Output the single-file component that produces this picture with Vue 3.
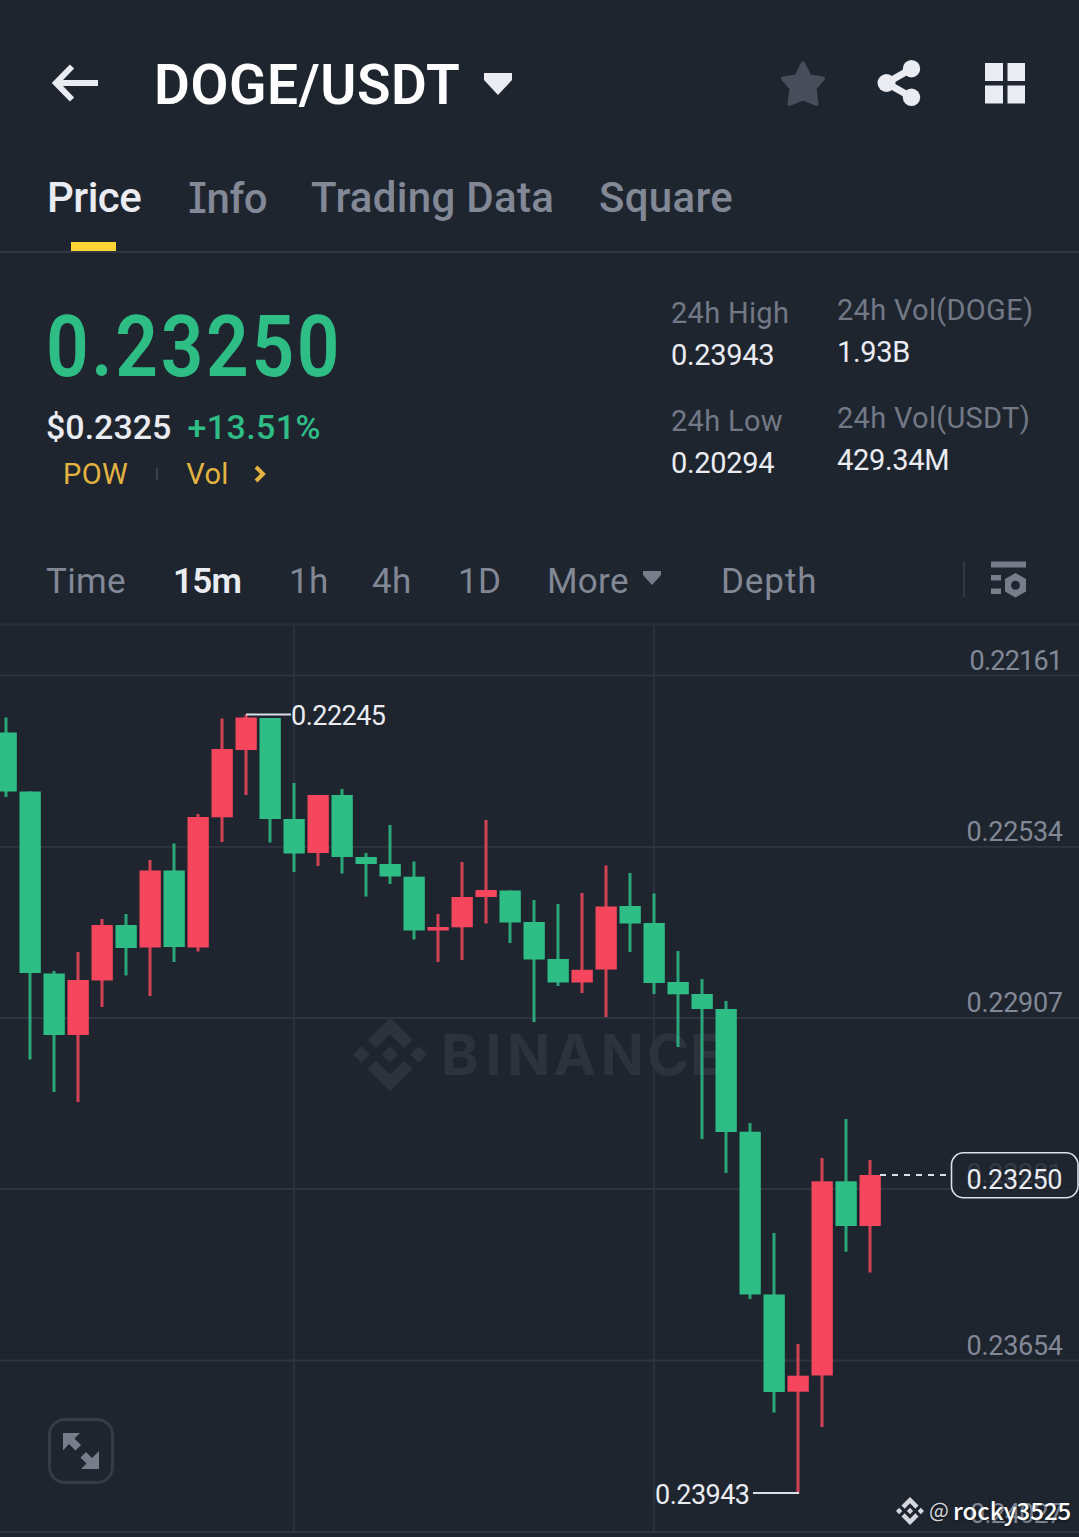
<template>
  <div class="screen">
    <header class="header">
      <svg class="back" width="46" height="38" viewBox="0 0 46 38">
        <path d="M20 2.5 L4 19 L20 35.5 M4 19 H46" />
      </svg>
      <h1 class="pair">DOGE/USDT</h1>
      <svg class="caret" width="28" height="22" viewBox="0 0 28 22">
        <path d="M0 0 H28 V7 L14 22 L0 7 Z" />
      </svg>
      <div class="actions">
        <svg class="star" width="46" height="48" viewBox="0 0 46 48">
          <path d="M23 3.5 L29.5 16.5 L43 18.5 L34.5 28.5 L36.5 44 L23 38.5 L9.5 44 L11.5 28.5 L3 18.5 L16.5 16.5 Z" />
        </svg>
        <svg class="share" width="44" height="48" viewBox="0 0 44 48">
          <path d="M35 9.5 L9.5 24 L35 38.5" />
          <circle cx="9.5" cy="24" r="9" />
          <circle cx="34.5" cy="9.7" r="8.7" />
          <circle cx="34.5" cy="38.3" r="8.7" />
        </svg>
        <svg class="grid" width="40" height="42" viewBox="0 0 40 42">
          <path d="M0 0 H18 V18 H0 Z M22.5 0 H40 V18 H22.5 Z M0 22.5 H18 V40.5 H0 Z M22.5 22.5 H40 V40.5 H22.5 Z" />
        </svg>
      </div>
    </header>

    <nav class="tabs">
      <div
        v-for="tab in tabs"
        :key="tab.name"
        class="tab"
        :class="[tab.cls, { active: tab.name === activeTab }]"
        @click="activeTab = tab.name"
      >{{ tab.name }}</div>
    </nav>

    <section class="ticker">
      <div class="ticker-price">
        <div class="last-price">0.23250</div>
        <div class="sub-price">
          <span class="fiat">$0.2325</span>
          <span class="change">+13.51%</span>
        </div>
        <div class="tags">
          <span class="tag-pow">POW</span>
          <i class="tag-divider"></i>
          <span class="tag-vol">Vol</span>
          <svg class="chevron" width="12" height="18" viewBox="0 0 12 18">
            <path d="M2 2 L9 9 L2 16" />
          </svg>
        </div>
      </div>
      <div class="stats">
        <div v-for="(column, index) in stats" :key="index" class="stats-column">
          <div v-for="stat in column" :key="stat.label" class="stat">
            <div class="stat-label">{{ stat.label }}</div>
            <div class="stat-value">{{ stat.value }}</div>
          </div>
        </div>
      </div>
    </section>

    <nav class="intervals">
      <div class="interval">Time</div>
      <div class="interval active">15m</div>
      <div class="interval">1h</div>
      <div class="interval">4h</div>
      <div class="interval">1D</div>
      <div class="interval more">
        More
        <svg width="18" height="14" viewBox="0 0 18 14">
          <path d="M0 0 H18 V4 L9 14 L0 4 Z" />
        </svg>
      </div>
      <div class="interval depth">Depth</div>
      <div class="settings">
        <svg width="36" height="37" viewBox="0 0 36 37">
          <path d="M0 0.5 H35 V6.5 H0 Z M0 14 H10 V19.5 H0 Z M0 27.5 H10 V33 H0 Z" />
          <path fill-rule="evenodd" d="M24.5 12 L35 18 V30.5 L24.5 36.5 L14 30.5 V18 Z M24.5 19.7 A4.5 4.5 0 1 0 24.5 28.7 A4.5 4.5 0 1 0 24.5 19.7 Z" />
        </svg>
      </div>
    </nav>

    <section class="chart">
      <svg width="1079" height="911" viewBox="0 626 1079 911">
        <g class="grid-lines">
          <path v-for="y in gridRows" :key="'r' + y" :d="`M0 ${y} H1079`" />
          <path v-for="x in gridColumns" :key="'c' + x" :d="`M${x} 626 V1532`" />
        </g>

        <g class="brand">
          <path transform="translate(390 1054.5) scale(3.08)" :d="logoPath" />
          <text x="441 485.5 507 553.5 600.5 647 690" y="1075">BINANCE</text>
        </g>

        <g class="axis">
          <text
            v-for="label in axisLabels"
            :key="label.text"
            :x="label.x"
            :y="label.y"
            :textLength="1063 - label.x"
          >{{ label.text }}</text>
        </g>

        <g v-for="(candle, index) in candles" :key="index" :class="candle[0]">
          <rect class="wick" :x="4.5 + index * 24" :y="candle[1]" width="3" :height="candle[4] - candle[1]" />
          <rect :x="-4.5 + index * 24" :y="candle[2]" width="21.3" :height="candle[3] - candle[2]" />
        </g>

        <g class="marker">
          <path d="M246 714.5 H291" />
          <text x="291" y="725" textLength="95">0.22245</text>
          <path d="M753 1493 H799" />
          <text x="655" y="1504" textLength="95">0.23943</text>
        </g>

        <g class="current">
          <path stroke-dasharray="6 6" d="M880 1175 H947" />
          <rect x="951.5" y="1152.8" width="126.5" height="45" rx="12" />
          <text x="966.5" y="1189" textLength="96">0.23250</text>
        </g>
      </svg>

      <button class="expand">
        <svg width="38" height="38" viewBox="0 0 38 38">
          <path d="M1 1 H18 L12.5 6.5 L19 13 L13.5 18.5 L7 12 L1 18.5 Z M37 37 H19 L24.5 31.5 L18.5 25.5 L24 20 L30 26 L37 19 Z" />
        </svg>
      </button>

      <div class="author">
        <svg width="28" height="28" viewBox="-12 -12 24 24">
          <path :d="logoPath" />
        </svg>
        <span class="at">@</span>
        <span class="author-name">rocky3525</span>
      </div>
    </section>
  </div>
</template>

<script setup>
import { ref } from 'vue'

const activeTab = ref('Price')

const tabs = [
  { name: 'Price', cls: 'price' },
  { name: 'Info', cls: 'info' },
  { name: 'Trading Data', cls: 'trading' },
  { name: 'Square', cls: 'square' },
]

const stats = [
  [
    { label: '24h High', value: '0.23943' },
    { label: '24h Low', value: '0.20294' },
  ],
  [
    { label: '24h Vol(DOGE)', value: '1.93B' },
    { label: '24h Vol(USDT)', value: '429.34M' },
  ],
]

const gridRows = [675.5, 846.8, 1018, 1189, 1360.5, 1532]
const gridColumns = [294, 654]

const axisLabels = [
  { text: '0.22161', x: 969.5, y: 670 },
  { text: '0.22534', x: 966.5, y: 841 },
  { text: '0.22907', x: 966.5, y: 1012 },
  { text: '0.23281', x: 966.5, y: 1183 },
  { text: '0.23654', x: 966.5, y: 1355 },
  { text: '0.24027', x: 970, y: 1523 },
]

// side, high, body top, body bottom, low
const candles = [
  ['up', 717.5, 732.5, 791.5, 797],
  ['up', 791.5, 791.5, 973, 1059.5],
  ['up', 971, 973.5, 1035, 1092],
  ['down', 952, 980, 1035, 1102],
  ['down', 919, 925, 980.5, 1007],
  ['up', 914, 925, 948, 975.5],
  ['down', 860, 870.5, 947.5, 996],
  ['up', 843.5, 870.5, 947, 962],
  ['down', 814, 817, 947.5, 951.5],
  ['down', 718.5, 749, 817.3, 842],
  ['down', 714.5, 717.5, 750, 795],
  ['up', 718, 718, 819, 842.5],
  ['up', 783, 819, 853.5, 872],
  ['down', 795, 795, 853, 866],
  ['up', 789, 795, 857, 873.5],
  ['up', 853, 857, 864, 896.5],
  ['up', 825, 864, 876.5, 884],
  ['up', 861.5, 876.7, 930.5, 939.5],
  ['down', 914, 927, 930.5, 962],
  ['down', 862, 897, 927.3, 960],
  ['down', 820, 890, 897, 923.5],
  ['up', 890.5, 890.5, 922.5, 943],
  ['up', 900, 922, 959.5, 1022],
  ['up', 904, 959, 982.5, 986],
  ['down', 893, 969.8, 982.5, 993],
  ['down', 865.5, 906.5, 969.5, 1017],
  ['up', 873, 906, 923.5, 952],
  ['up', 893.5, 923, 983, 994],
  ['up', 951, 982, 994.3, 1047],
  ['up', 979, 994, 1009, 1139],
  ['up', 1001, 1009, 1132, 1173],
  ['up', 1123, 1131.7, 1294.5, 1299],
  ['up', 1233, 1294.5, 1392, 1412.5],
  ['down', 1344, 1375.7, 1391.7, 1493],
  ['down', 1158, 1181.3, 1375.5, 1427],
  ['up', 1119, 1181.3, 1226, 1251.7],
  ['down', 1160, 1175, 1226, 1272.5],
]

const logoPath =
  'M0 -12 L7.3 -4.7 L4.6 -2 L0 -6.6 L-4.6 -2 L-7.3 -4.7 Z ' +
  'M0 12 L7.3 4.7 L4.6 2 L0 6.6 L-4.6 2 L-7.3 4.7 Z ' +
  'M-12 0 L-9.3 -2.7 L-6.6 0 L-9.3 2.7 Z ' +
  'M12 0 L9.3 -2.7 L6.6 0 L9.3 2.7 Z ' +
  'M0 -2.7 L2.7 0 L0 2.7 L-2.7 0 Z'
</script>

<style>
body {
  background: #1f252f;
}
</style>

<style scoped>
.screen {
  width: 1079px;
  height: 1537px;
  overflow: hidden;
  background: #1f252f;
  color: #eaecf2;
  font-family: Roboto, 'Liberation Sans', sans-serif;
}

.header {
  display: flex;
  align-items: center;
  height: 166px;
  box-sizing: border-box;
  padding: 0 54px 0 52px;
}

.back {
  fill: none;
  stroke: #eaecf2;
  stroke-width: 6;
}

.pair {
  width: 330px;
  margin: 4px 0 0 56px;
  font-size: 55px;
  font-weight: 600;
  line-height: 66px;
  letter-spacing: 0.6px;
  color: #fff;
  white-space: nowrap;
}

.caret {
  margin-top: 2px;
  fill: #eaecf2;
}

.actions {
  display: flex;
  align-items: center;
  margin-left: auto;
}

.star {
  margin-top: 2px;
  fill: #474d5a;
  stroke: #474d5a;
  stroke-width: 4;
  stroke-linejoin: round;
}

.share {
  margin: 0 64px 0 51px;
  fill: #eaecf2;
}

.share path {
  fill: none;
  stroke: #eaecf2;
  stroke-width: 7;
}

.grid {
  margin-top: 1px;
  fill: #eaecf2;
}

.tabs {
  display: grid;
  grid-template-columns: 141px 123px 288px 150px;
  height: 87px;
  box-sizing: border-box;
  padding-left: 47px;
  border-bottom: 2px solid #323742;
}

.tab {
  position: relative;
  font-size: 42px;
  font-weight: 500;
  line-height: 64px;
  letter-spacing: 0.3px;
  color: #828896;
  white-space: nowrap;
}

.tab.price,
.tab.info {
  letter-spacing: -0.5px;
}

.tab.active {
  color: #eaecf2;
}

.tab.active::after {
  content: '';
  position: absolute;
  left: 24px;
  bottom: 0;
  width: 45px;
  height: 9px;
  background: #fcd535;
}

.tab.info::first-letter {
  font-family: Inter;
  font-feature-settings: 'cv08';
}

.ticker {
  display: flex;
  justify-content: space-between;
  height: 287px;
  padding-left: 46px;
}

.ticker-price {
  padding-top: 48px;
}

/* narrow figures with open spacing */
.last-price {
  width: 330px;
  font-size: 85px;
  font-weight: 600;
  line-height: 92px;
  letter-spacing: 3px;
  color: #2ebd85;
  transform: scaleX(0.88);
  transform-origin: left center;
}

.sub-price {
  display: flex;
  gap: 16px;
  margin-top: 12px;
  font-size: 34px;
  font-weight: 500;
  line-height: 44px;
}

.change {
  letter-spacing: 0.4px;
  color: #2ebd85;
}

.tags {
  display: flex;
  align-items: center;
  margin-top: 8px;
  padding-left: 17px;
  font-size: 29px;
  line-height: 34px;
  letter-spacing: 0.4px;
  color: #e3b341;
}

.tag-divider {
  width: 2px;
  height: 12px;
  margin: 0 28px;
  background: #3a3f4b;
}

.chevron {
  margin-left: 25px;
  fill: none;
  stroke: #e3b341;
  stroke-width: 4;
}

.stats {
  display: grid;
  grid-template-columns: 166px 242px;
}

.stats-column {
  display: flex;
  flex-direction: column;
  gap: 32px;
  padding-top: 43px;
}

.stats-column:last-child {
  padding-top: 40px;
}

.stat {
  font-size: 29px;
  line-height: 34px;
  white-space: nowrap;
}

.stat-label {
  letter-spacing: 0.3px;
  color: #727885;
}

.stat-value {
  margin-top: 8px;
  letter-spacing: -0.3px;
}

.intervals {
  display: grid;
  grid-template-columns: 128px 115px 83px 86px 89px 174px 242px 1fr;
  align-items: center;
  height: 86px;
  box-sizing: border-box;
  padding-left: 46px;
  border-bottom: 3px solid #272d38;
}

.interval {
  font-size: 35px;
  line-height: 44px;
  letter-spacing: 0.3px;
  color: #828896;
  white-space: nowrap;
}

.interval.active {
  margin-left: -1px;
  font-weight: 600;
  letter-spacing: -0.8px;
  color: #eaecf2;
}

.interval.more {
  display: flex;
  align-items: center;
  gap: 14px;
}

.interval.depth {
  letter-spacing: 0.9px;
}

.interval svg,
.settings svg {
  display: block;
  fill: #777d8b;
}

.interval svg {
  margin-top: -8px;
}

.settings {
  height: 36px;
  margin-top: -6px;
  padding-left: 26px;
  border-left: 2px solid #323742;
}

.chart {
  position: relative;
  height: 911px;
}

.chart > svg {
  display: block;
}

.grid-lines {
  fill: none;
  stroke: #2f343f;
  stroke-width: 1.8;
}

.brand {
  fill: #2d323d;
  font-family: Inter, sans-serif;
  font-size: 57px;
  font-weight: 700;
}

.axis {
  fill: #828896;
  font-size: 27px;
}

.axis,
.marker,
.current {
  font-stretch: 88%;
}

.up {
  fill: #2ebd85;
}

.down {
  fill: #f6465d;
}

.wick {
  opacity: 0.85;
}

.marker,
.current {
  fill: #eaecf2;
  font-size: 27px;
}

.marker path,
.current path {
  stroke: #dcdee8;
  stroke-width: 2;
}

.current rect {
  fill: #1f252f;
  fill-opacity: 0.8;
  stroke: #dcdee8;
  stroke-width: 1.6;
}

.expand {
  position: absolute;
  left: 48px;
  top: 792px;
  display: flex;
  align-items: center;
  justify-content: center;
  width: 66px;
  height: 66px;
  padding: 0;
  border: 3px solid #363b47;
  border-radius: 17px;
  background: none;
}

.expand svg {
  fill: #777d8b;
}

.author {
  position: absolute;
  left: 896px;
  top: 867px;
  display: flex;
  align-items: center;
  height: 36px;
  font-family: 'Noto Sans CJK SC', sans-serif;
  font-size: 24px;
  line-height: 36px;
  white-space: nowrap;
  text-shadow: 0 1px 3px rgba(0, 0, 0, 0.5);
}

.author svg {
  fill: #d5d7dc;
}

.at {
  width: 24px;
  margin: -4px 0 0 5px;
  font-size: 21px;
  color: #d5d7dc;
}

.author-name {
  margin-top: -3px;
  font-weight: 500;
  color: #fff;
}
</style>
